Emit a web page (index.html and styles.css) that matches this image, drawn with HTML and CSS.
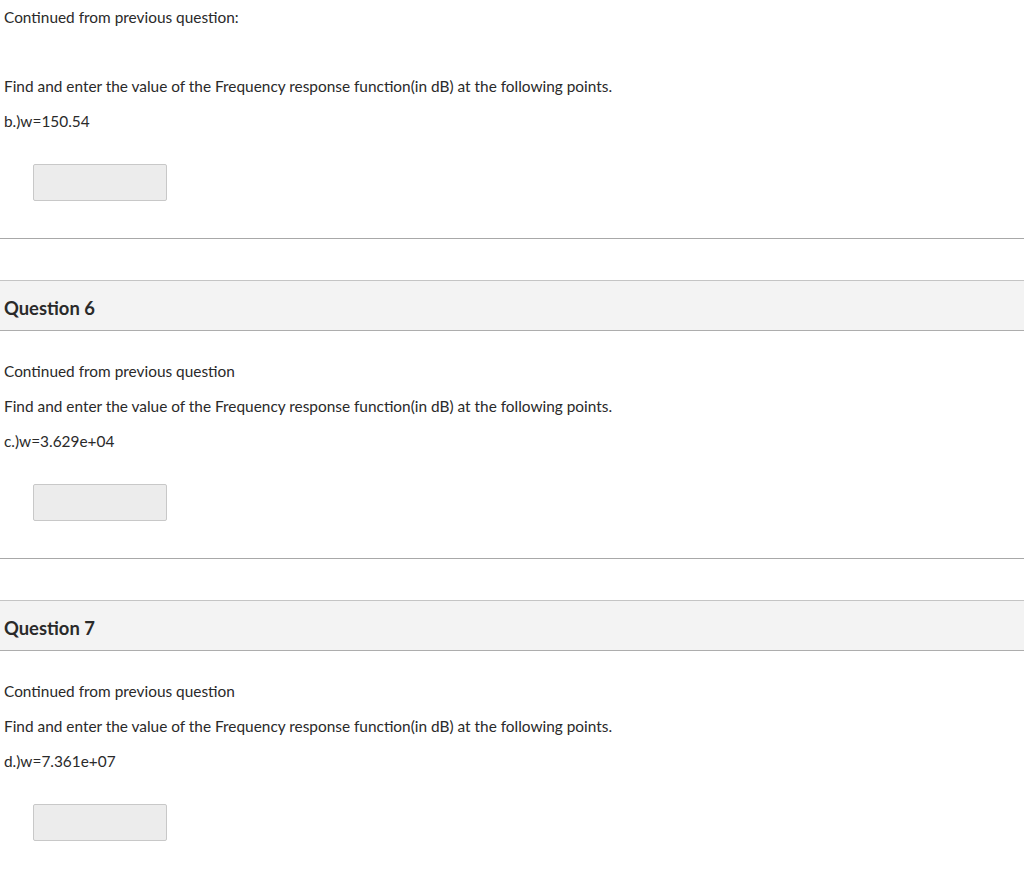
FILE: index.html
```html
<!DOCTYPE html>
<html>
<head>
<meta charset="utf-8">
<link rel="stylesheet" href="styles.css">
</head>
<body>
<div class="page">
  <section class="q first">
    <div class="body">
      <p class="lead">Continued from previous question:</p>
      <p>Find and enter the value of the Frequency response function(in dB) at the following points.</p>
      <p>b.)w=150.54</p>
      <div class="answer"><input type="text" class="box"></div>
    </div>
  </section>
  <hr class="sep">
  <section class="q">
    <h2 class="head">Question 6</h2>
    <div class="body">
      <p>Continued from previous question</p>
      <p>Find and enter the value of the Frequency response function(in dB) at the following points.</p>
      <p>c.)w=3.629e+04</p>
      <div class="answer"><input type="text" class="box"></div>
    </div>
  </section>
  <hr class="sep">
  <section class="q">
    <h2 class="head">Question 7</h2>
    <div class="body">
      <p>Continued from previous question</p>
      <p>Find and enter the value of the Frequency response function(in dB) at the following points.</p>
      <p>d.)w=7.361e+07</p>
      <div class="answer"><input type="text" class="box"></div>
    </div>
  </section>
</div>
</body>
</html>
```

FILE: styles.css
```css
html, body {
  margin: 0;
  padding: 0;
  background: #ffffff;
}
body {
  font-family: Lato, "Liberation Sans", sans-serif;
  font-size: 15.4px;
  color: #2a2a2a;
}
.page {
  width: 1024px;
  padding-bottom: 30px;
}
.q {
  display: flex;
  flex-direction: column;
}
.head {
  margin: 0;
  height: 44px;
  line-height: 44px;
  padding: 5px 4px 0;
  background: #f3f3f3;
  border-top: 1px solid #c4c4c4;
  border-bottom: 1px solid #adadad;
  font-size: 18.4px;
  font-weight: 700;
  color: #2a2a2a;
}
.body {
  padding: 30px 4px 0;
}
.first .body {
  padding-top: 7px;
}
.body p {
  margin: 0 0 15px;
  line-height: 20px;
}
.body p.lead {
  margin-bottom: 49px;
}
.answer {
  padding: 18px 0 0 29px;
}
.box {
  display: block;
  box-sizing: border-box;
  width: 134px;
  height: 37px;
  margin: 0;
  background: #ececec;
  border: 1px solid #c8c8c8;
  border-radius: 2px;
}
.sep {
  margin: 37px 0 41px;
  border: 0;
  height: 1px;
  background: #a8a8a8;
}
```
